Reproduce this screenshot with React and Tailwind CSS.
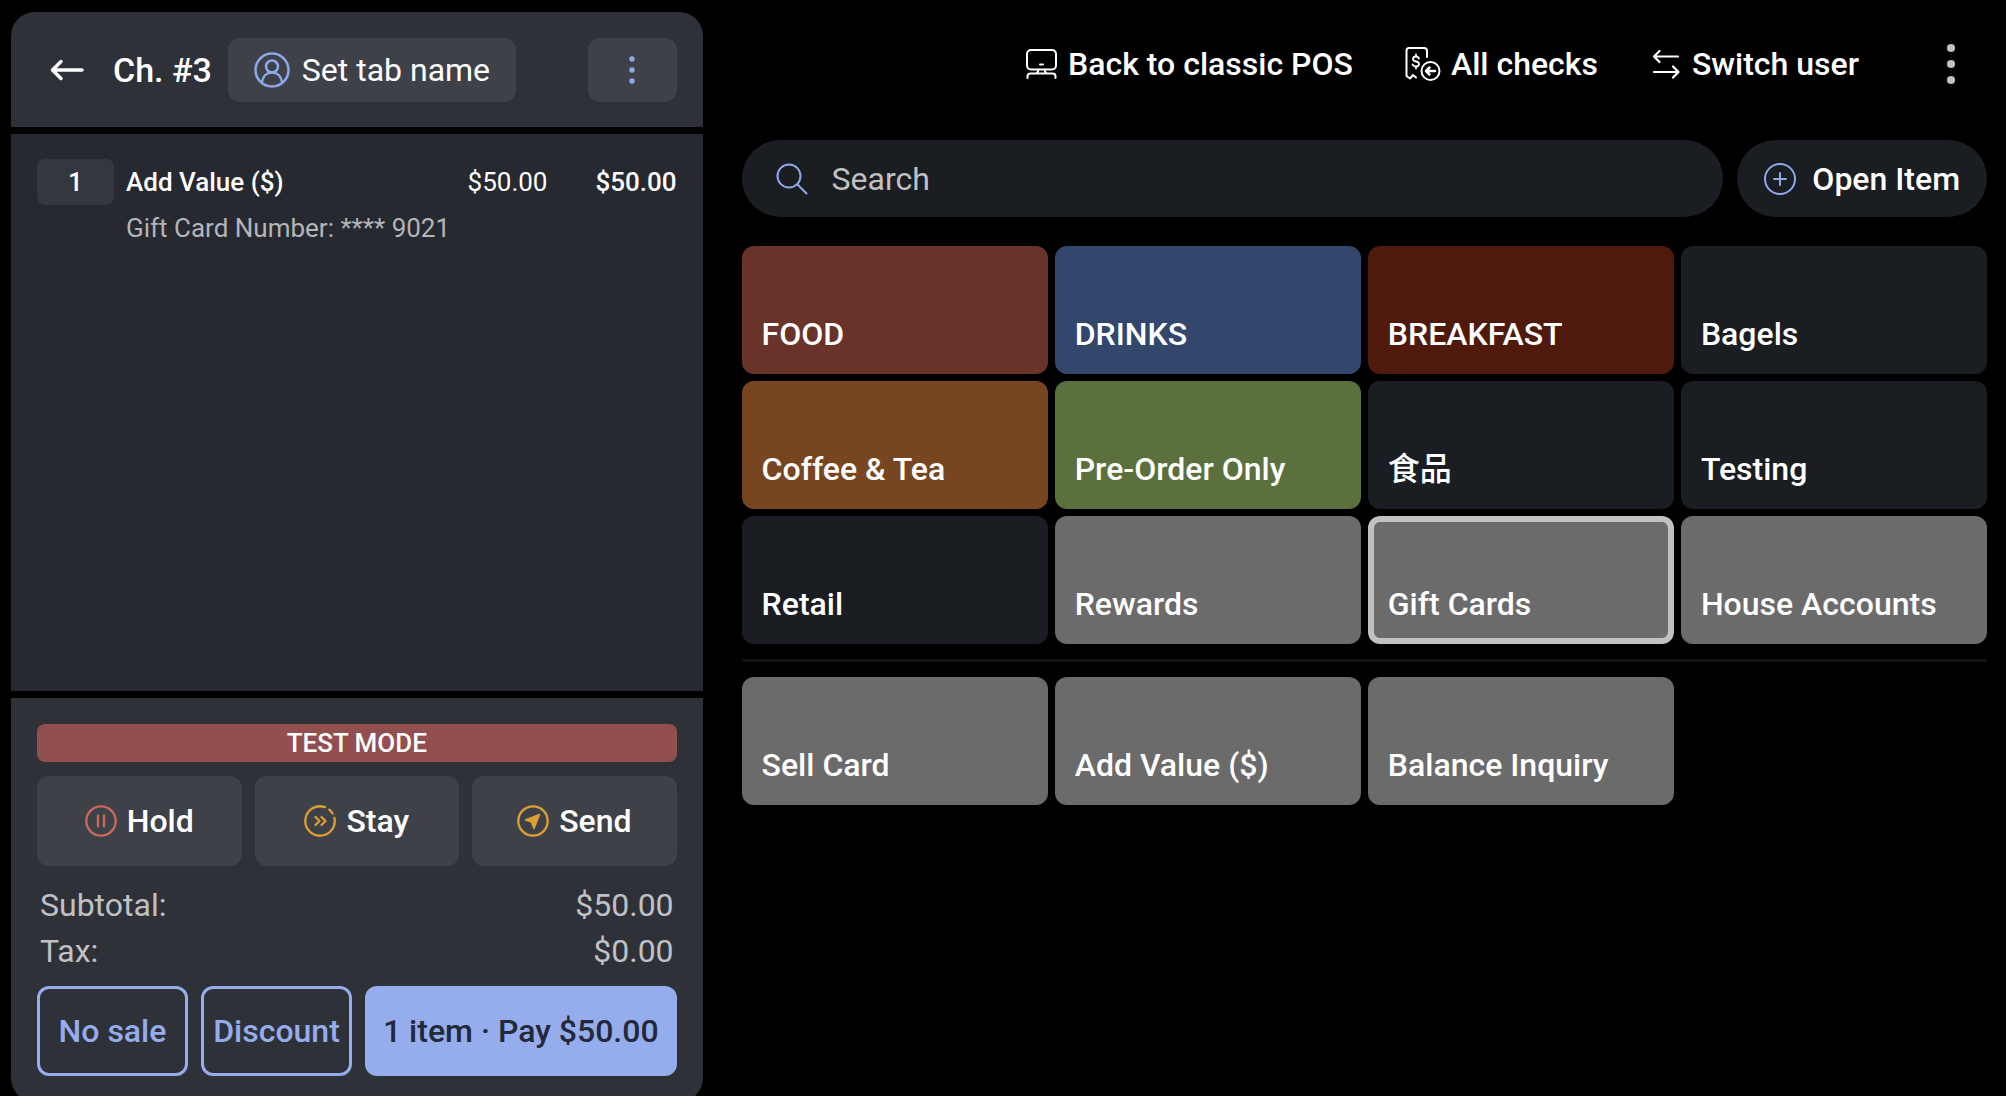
"use client";

import { useState } from "react";

const categories = [
  { name: "FOOD", color: "bg-[#6a3329]" },
  { name: "DRINKS", color: "bg-[#32476b]" },
  { name: "BREAKFAST", color: "bg-[#4f190c]" },
  { name: "Bagels", color: "bg-[#1a1d22]" },
  { name: "Coffee & Tea", color: "bg-[#774621]" },
  { name: "Pre-Order Only", color: "bg-[#5b703d]" },
  { name: "食品", color: "bg-[#1a1d22]" },
  { name: "Testing", color: "bg-[#1a1d22]" },
  { name: "Retail", color: "bg-[#1a1d22]" },
  { name: "Rewards", color: "bg-[#6b6b6b]" },
  { name: "Gift Cards", color: "bg-[#6b6b6b]" },
  { name: "House Accounts", color: "bg-[#6b6b6b]" },
];

const giftCardItems = ["Sell Card", "Add Value ($)", "Balance Inquiry"];

// Icons
function Icon({ children, className, box = 32, width = 2 }) {
  return (
    <svg
      viewBox={`0 0 ${box} ${box}`}
      fill="none"
      stroke="currentColor"
      strokeWidth={width}
      strokeLinecap="round"
      strokeLinejoin="round"
      className={`shrink-0 ${className}`}
      aria-hidden="true"
    >
      {children}
    </svg>
  );
}

function BackIcon() {
  return (
    <Icon className="size-9" box={36} width={3.5}>
      <path d="M33 18H4M12 9.500L3.500 18l8.500 8.500" />
    </Icon>
  );
}

function PersonIcon() {
  return (
    <Icon className="size-9 text-[#8fa8ea]" box={36} width={2.5}>
      <circle cx="18" cy="18" r="16.5" />
      <circle cx="18" cy="14.5" r="6" />
      <path d="M8 30c1-6 5-9.500 10-9.500S27 24 28 30" />
    </Icon>
  );
}

function DotsIcon({ className, radius }) {
  return (
    <svg viewBox="0 0 40 44" fill="currentColor" className={className} aria-hidden="true">
      <circle cx="20" cy={22 - radius * 4} r={radius} />
      <circle cx="20" cy="22" r={radius} />
      <circle cx="20" cy={22 + radius * 4} r={radius} />
    </svg>
  );
}

function TerminalIcon() {
  return (
    <Icon className="size-8">
      <rect x="1" y="2" width="29" height="19.500" rx="4" />
      <path d="M14 16.500h3M12.500 21.500q0 2-2 4M18.500 21.500q0 2 2 4M1.500 30v-1.500q0-3 3-3h22q3 0 3 3V30" />
    </Icon>
  );
}

function ChecksIcon() {
  return (
    <Icon className="size-9" box={36}>
      <path d="M22 11V5q0-3-3-3H4Q1.500 2 1.500 5v25l3.500 2.500 3-3.500 3 2.500" />
      <path
        d="M14 12.500q-1-2-3-2-3 0-3 2.500 0 2 3 2.500t3 2.500q0 2.500-3 2.500-2.500 0-3.500-2M11 8.500v2M11 20.500v2"
        strokeWidth="1.800"
      />
      <circle cx="25.500" cy="25" r="9" />
      <path d="M30 25h-9M24.500 21.500L21 25l3.500 3.500" strokeWidth="2.500" />
    </Icon>
  );
}

function SwitchIcon() {
  return (
    <Icon className="size-8" width={2.2}>
      <path d="M28 8.500H5M9.500 3L4 8.500 9.500 14M4 24h24M23 18.500l5.500 5.500-5.500 5.500" />
    </Icon>
  );
}

function SearchIcon() {
  return (
    <Icon className="size-8 text-[#8fa8ea]">
      <circle cx="13" cy="13" r="11.500" />
      <path d="M21.500 21.500L30.500 30.500" />
    </Icon>
  );
}

function PlusIcon() {
  return (
    <Icon className="size-8 text-[#8fa8ea]">
      <circle cx="16" cy="16" r="15" />
      <path d="M16 10v12M10 16h12" />
    </Icon>
  );
}

function HoldIcon() {
  return (
    <Icon className="size-8 text-[#c9685d]" width={2.3}>
      <circle cx="16" cy="16" r="14.700" />
      <path d="M13 10.500v11M19 10.500v11" />
    </Icon>
  );
}

function StayIcon() {
  return (
    <Icon className="size-8 text-[#dd9f33]" width={2.3}>
      <path d="M21 2.200A14.700 14.700 0 1 0 30.400 13" />
      <path d="M25.300 4.600A14.700 14.700 0 0 1 28.600 8.500" />
      <path d="M11.500 12l4 4-4 4M17.500 12l4 4-4 4" />
    </Icon>
  );
}

function SendIcon() {
  return (
    <Icon className="size-8 text-[#dd9f33]" width={2.3}>
      <circle cx="16" cy="16" r="14.700" />
      <path d="M22.500 9.500L8.500 15l6 2 2.500 6.500z" fill="currentColor" strokeWidth="1.500" />
    </Icon>
  );
}

function Tile({ name, color, selected, onClick }) {
  return (
    <button
      type="button"
      onClick={onClick}
      className={`relative flex h-32 items-end overflow-hidden rounded-xl px-5 pb-5 text-left ${color}`}
    >
      {name}
      {selected && <span className="absolute inset-0 rounded-xl border-6 border-[#c1c1c1]" />}
    </button>
  );
}

function CheckPanel() {
  return (
    <aside className="flex h-[calc(100vh-6px)] w-[35%] shrink-0 flex-col gap-[7px] overflow-hidden rounded-3xl">
      {/* Check header */}
      <header className="flex h-[115px] shrink-0 items-center bg-[#2f3138] px-[26px]">
        <button type="button" aria-label="Back" className="px-3">
          <BackIcon />
        </button>
        <h1 className="ml-4 text-[34px] font-medium">Ch. #3</h1>
        <button type="button" className="ml-4 flex h-16 items-center gap-3 rounded-xl bg-[#3f4148] px-[26px]">
          <PersonIcon />
          Set tab name
        </button>
        <button
          type="button"
          aria-label="Check options"
          className="ml-auto flex h-16 w-[89px] items-center justify-center rounded-xl bg-[#3f4148] text-[#8fa8ea]"
        >
          <DotsIcon className="h-10 w-10" radius={3} />
        </button>
      </header>

      {/* Items */}
      <section className="min-h-0 flex-1 overflow-auto bg-[#26292f] px-[26px] py-[25px] text-[26px] leading-[46px]">
        <div className="flex items-center">
          <button type="button" className="w-[77px] rounded-lg bg-[#34373d] text-center font-medium">
            1
          </button>
          <span className="ml-3 font-medium">Add Value ($)</span>
          <span className="ml-auto">$50.00</span>
          <span className="ml-12 font-medium">$50.00</span>
        </div>
        <p className="ml-[89px] text-[#b4b5b8]">Gift Card Number: **** 9021</p>
      </section>

      {/* Actions and totals */}
      <footer className="shrink-0 bg-[#2f3138] px-[26px] py-[26px]">
        <p className="rounded-lg bg-[#91504f] text-center text-[26px] leading-[38px] font-medium">TEST MODE</p>
        <div className="mt-[14px] grid grid-cols-3 gap-[13px] font-medium">
          <button type="button" className="flex h-[90px] items-center justify-center gap-2.5 rounded-xl bg-[#3f4148]">
            <HoldIcon />
            Hold
          </button>
          <button type="button" className="flex h-[90px] items-center justify-center gap-2.5 rounded-xl bg-[#3f4148]">
            <StayIcon />
            Stay
          </button>
          <button type="button" className="flex h-[90px] items-center justify-center gap-2.5 rounded-xl bg-[#3f4148]">
            <SendIcon />
            Send
          </button>
        </div>
        <dl className="mt-4 mb-3 px-[3px] leading-[46px] text-[#c0c1c4]">
          <div className="flex justify-between">
            <dt>Subtotal:</dt>
            <dd>$50.00</dd>
          </div>
          <div className="flex justify-between">
            <dt>Tax:</dt>
            <dd>$0.00</dd>
          </div>
        </dl>
        <div className="flex gap-[13px] font-medium whitespace-nowrap">
          <button type="button" className="h-[90px] w-[151px] rounded-xl border-3 border-[#95adec] text-[#95adec]">
            No sale
          </button>
          <button type="button" className="h-[90px] w-[151px] rounded-xl border-3 border-[#95adec] text-[#95adec]">
            Discount
          </button>
          <button type="button" className="h-[90px] flex-1 rounded-xl bg-[#95adec] text-[#23283a]">
            1 item · Pay $50.00
          </button>
        </div>
      </footer>
    </aside>
  );
}

export default function App() {
  const [selected, setSelected] = useState("Gift Cards");
  const [query, setQuery] = useState("");

  return (
    <div className="flex h-screen gap-[39px] overflow-hidden bg-black pt-3 pr-[19px] pl-[11px] font-['Roboto','Noto_Sans_CJK_SC',sans-serif] text-[32px] leading-10 text-white">
      <CheckPanel />

      <main className="min-w-0 flex-1 font-medium">
        {/* Top navigation */}
        <nav className="flex h-[104px] items-center justify-end pr-4">
          <a href="#classic" className="flex items-center gap-2.5">
            <TerminalIcon />
            Back to classic POS
          </a>
          <a href="#checks" className="ml-13 flex items-center gap-2.5">
            <ChecksIcon />
            All checks
          </a>
          <a href="#switch" className="ml-13 flex items-center gap-2.5">
            <SwitchIcon />
            Switch user
          </a>
          <button type="button" aria-label="More" className="ml-[72px] text-[#c1c1c1]">
            <DotsIcon className="h-11 w-10" radius={4} />
          </button>
        </nav>

        {/* Search */}
        <div className="mt-6 flex gap-[14px]">
          <label className="flex h-[77px] flex-1 items-center gap-6 rounded-full bg-[#1a1d22] px-[34px]">
            <SearchIcon />
            <input
              type="text"
              aria-label="Search"
              placeholder="Search"
              value={query}
              onChange={(e) => setQuery(e.target.value)}
              className="min-w-0 flex-1 bg-transparent font-normal outline-none placeholder:text-[#c1c1c1]"
            />
          </label>
          <button type="button" className="flex h-[77px] items-center gap-4 rounded-full bg-[#1a1d22] px-[27px]">
            <PlusIcon />
            Open Item
          </button>
        </div>

        {/* Categories */}
        <div className="mt-[29px] grid grid-cols-4 gap-[7px]">
          {categories.map((category) => (
            <Tile
              key={category.name}
              name={category.name}
              color={category.color}
              selected={selected === category.name}
              onClick={() => setSelected(category.name)}
            />
          ))}
        </div>

        <hr className="my-[15px] border-t-3 border-[#121212]" />

        <div className="grid grid-cols-4 gap-[7px]">
          {giftCardItems.map((item) => (
            <Tile key={item} name={item} color="bg-[#6b6b6b]" />
          ))}
        </div>
      </main>
    </div>
  );
}
